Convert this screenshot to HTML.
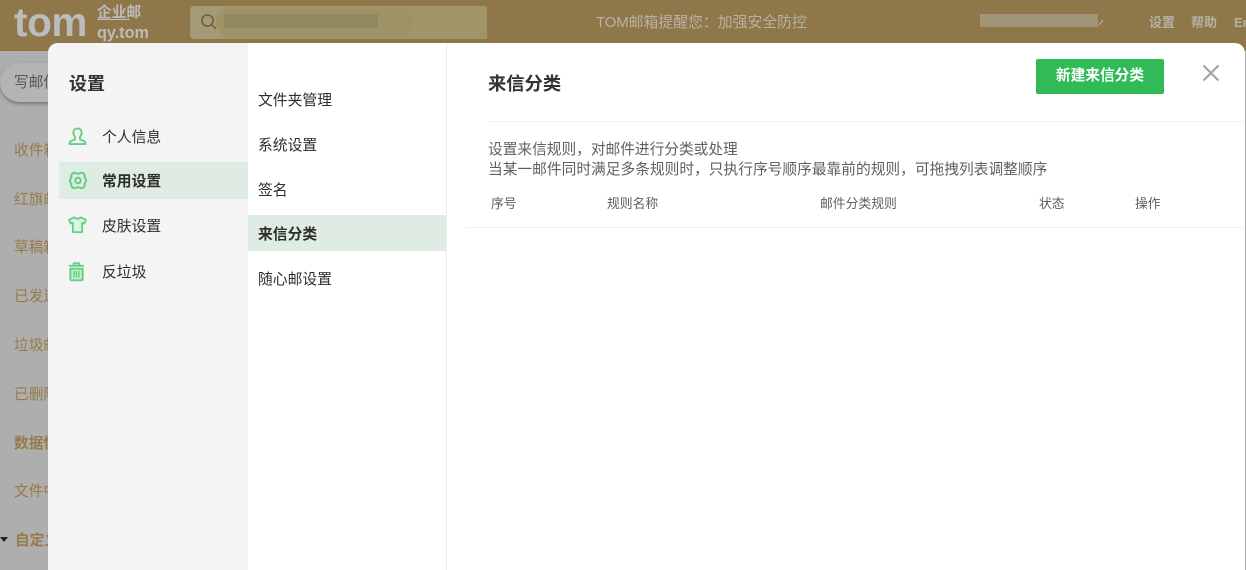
<!DOCTYPE html>
<html lang="zh">
<head>
<meta charset="utf-8">
<title>设置</title>
<style>
*{box-sizing:border-box;margin:0;padding:0}
html,body{width:1246px;height:570px;overflow:hidden;background:#aeaeae;font-family:"Liberation Sans","Noto Sans CJK SC",sans-serif}
body{position:relative}
.a{position:absolute;white-space:nowrap}
#hd{left:0;top:0;width:1246px;height:51px;background:#8f774a}
.side{left:14px;font-size:14.7px;line-height:20px;color:#967b49}
#modal{left:48px;top:43px;width:1197px;height:527px;background:#fff;border-radius:10px 10px 0 0;overflow:hidden}
.t{color:#2e2e2e;font-size:14.8px;line-height:22px}
.h{color:#5e5e5e;font-size:12.8px;line-height:18px}
</style>
</head>
<body>
<div class="a" id="hd"></div>
<div class="a" style="left:14px;top:-1px;font:bold 40.5px/46px 'Liberation Sans',sans-serif;color:#bcbcbc;letter-spacing:-.4px">tom</div>
<div class="a" style="left:97px;top:4px;font-size:14.7px;font-weight:700;line-height:18px;color:#bcbcbc">企业邮</div>
<div class="a" style="left:97px;top:24px;font-size:16.2px;font-weight:700;line-height:18px;color:#bcbcbc">qy.tom</div>
<div class="a" style="left:97px;top:19px;width:33px;height:1px;background:#bcbcbc"></div>
<div class="a" style="left:190px;top:6px;width:297px;height:33px;background:#9f9567;border-radius:4px 0 0 4px"></div>
<div class="a" style="left:190px;top:6px;width:35px;height:33px;background:#a49a78;border-radius:4px 0 0 4px"></div>
<div class="a" style="left:216px;top:7px;width:197px;height:29px;background:#9d9364;border-radius:13px"></div>
<div class="a" style="left:224px;top:14px;width:154px;height:14px;background:#90895f"></div>
<svg class="a" style="left:200px;top:13px" width="18" height="18" viewBox="0 0 18 18" fill="none" stroke="#6d5a36" stroke-width="1.4"><circle cx="7.500" cy="7.500" r="5.600"/><path d="M11.600 11.600L16 16"/></svg>
<div class="a" style="left:596px;top:12px;font-size:14.850px;line-height:22px;color:#b8b2a4">TOM邮箱提醒您：加强安全防控</div>
<div class="a" style="left:980px;top:14px;width:118px;height:13px;background:#a29478"></div>
<div class="a" style="left:1098px;top:22px;width:6px;height:1px;background:#bcbcbc;transform:rotate(-50deg)"></div>
<div class="a" style="left:1149px;top:13px;font-size:13px;font-weight:700;line-height:20px;color:#b5b0a4">设置</div>
<div class="a" style="left:1191px;top:13px;font-size:13px;font-weight:700;line-height:20px;color:#b5b0a4">帮助</div>
<div class="a" style="left:1234px;top:13px;font-size:13px;font-weight:700;line-height:20px;color:#b5b0a4">En</div>

<div class="a" style="left:0;top:63px;width:70px;height:39px;background:#b4b4b4;border-radius:20px;box-shadow:0 2px 3px #777"></div>
<div class="a" style="left:14px;top:73px;font-size:14.7px;line-height:20px;color:#555">写邮件</div>
<div class="a side" style="top:141px">收件箱</div>
<div class="a side" style="top:190px">红旗邮</div>
<div class="a side" style="top:238px">草稿箱</div>
<div class="a side" style="top:287px">已发送</div>
<div class="a side" style="top:336px">垃圾邮</div>
<div class="a side" style="top:385px">已删除</div>
<div class="a side" style="top:434px;font-weight:700">数据恢</div>
<div class="a side" style="top:482px">文件中</div>
<div class="a side" style="left:15px;top:531px;font-weight:700">自定义</div>
<div class="a" style="left:0;top:537px;width:0;height:0;border-left:4px solid transparent;border-right:4px solid transparent;border-top:5px solid #222"></div>

<div class="a" id="modal">
  <div class="a" style="left:0;top:0;width:200px;height:527px;background:#f4f4f4"></div>
  <div class="a" style="left:398px;top:0;width:1px;height:527px;background:#ececec"></div>

  <div class="a" style="left:21px;top:29px;font-size:18px;font-weight:700;line-height:24px;color:#333">设置</div>
  <div class="a" style="left:11px;top:119px;width:189px;height:37px;background:#dfece3"></div>

  <svg class="a" style="left:20px;top:84px" width="19" height="19" viewBox="0 0 20 20" fill="none" stroke="#62d082" stroke-width="2" stroke-linejoin="round"><path d="M10 1.500c-2.800 0-4.300 2-4.300 4.400 0 1.900.7 3.400 1.800 4.500v1.800c0 .8-.6 1.100-1.300 1.400l-3.100 1.300c-1 .4-1.400 1-1.400 1.900V18h16.600v-1.200c0-.9-.4-1.500-1.400-1.900l-3.100-1.300c-.7-.3-1.300-.6-1.300-1.400v-1.800c1.100-1.100 1.800-2.600 1.800-4.500 0-2.400-1.500-4.400-4.300-4.400z"/></svg>
  <svg class="a" style="left:20px;top:128px" width="20" height="19" viewBox="0 0 22 20" fill="none" stroke="#62d082" stroke-width="2.200" stroke-linejoin="round"><path d="M7.500 1.500c1 .6 1.600 1 3.500 1s2.500-.4 3.500-1c1.400 0 2.800.8 3.500 2 .7 1.300.5 2.400.2 3.100.9 1.200 1.800 2 1.800 3.400s-.9 2.200-1.800 3.400c.3.700.5 1.800-.2 3.100-.7 1.200-2.100 2-3.500 2-1-.6-1.600-1-3.500-1s-2.500.4-3.500 1c-1.400 0-2.800-.8-3.500-2-.7-1.300-.5-2.400-.2-3.100C2.900 12.200 2 11.400 2 10s.9-2.200 1.800-3.400c-.3-.7-.5-1.800.2-3.100.7-1.200 2.100-2 3.500-2z"/><circle cx="11" cy="10" r="3"/></svg>
  <svg class="a" style="left:20px;top:173px" width="19" height="18" viewBox="0 0 20 20" fill="#dff3e4" stroke="#62d082" stroke-width="2" stroke-linejoin="round"><path d="M6.500 1.500C7.500 2.500 8.600 3 10 3s2.500-.5 3.500-1.500l5.300 2.300c.5.200.6.600.4 1l-1.700 3.500-2.300-.8v9.600c0 .6-.3.900-.9.900H5.700c-.6 0-.9-.3-.9-.9V7.500l-2.300.8L.8 4.800c-.2-.4-.1-.8.4-1z"/></svg>
  <svg class="a" style="left:20px;top:218px" width="17" height="21" viewBox="0 0 18 21" fill="#c5eccf" stroke="#62d082" stroke-width="2" stroke-linejoin="round"><path d="M1 4.500h16M6 4V1.800h6V4" fill="none"/><path d="M2.500 7.500h13v11c0 .8-.5 1.300-1.300 1.300H3.800c-.8 0-1.300-.5-1.300-1.300z"/><path d="M6.500 10v7M9 10v7M11.500 10v7" stroke-width="1.500"/></svg>

  <div class="a t" style="left:54px;top:84px">个人信息</div>
  <div class="a t" style="left:54px;top:128px;font-weight:700">常用设置</div>
  <div class="a t" style="left:54px;top:173px">皮肤设置</div>
  <div class="a t" style="left:54px;top:219px">反垃圾</div>

  <div class="a" style="left:200px;top:172px;width:198px;height:36px;background:#dfece3"></div>
  <div class="a t" style="left:210px;top:47px">文件夹管理</div>
  <div class="a t" style="left:210px;top:92px">系统设置</div>
  <div class="a t" style="left:210px;top:137px">签名</div>
  <div class="a t" style="left:210px;top:181px;font-weight:700">来信分类</div>
  <div class="a t" style="left:210px;top:226px">随心邮设置</div>

  <div class="a" style="left:440px;top:28px;font-size:18.300px;font-weight:700;line-height:26px;color:#333">来信分类</div>
  <div class="a" style="left:988px;top:16px;width:128px;height:35px;background:#30bb56;border-radius:2px;color:#fff;font-size:14.700px;font-weight:700;line-height:35px;text-align:center">新建来信分类</div>
  <svg class="a" style="left:1154px;top:21px" width="18" height="18" viewBox="0 0 18 18" fill="none" stroke="#a3a3a3" stroke-width="2.200"><path d="M1.500 1.500l15 15M16.500 1.500l-15 15"/></svg>

  <div class="a" style="left:440px;top:78px;width:757px;height:1px;background:#f2f2f2"></div>
  <div class="a" style="left:440px;top:97px;font-size:14.700px;line-height:20px;color:#5f5f5f">设置来信规则，对邮件进行分类或处理</div>
  <div class="a" style="left:440px;top:117px;font-size:14.720px;line-height:20px;color:#5f5f5f">当某一邮件同时满足多条规则时，只执行序号顺序最靠前的规则，可拖拽列表调整顺序</div>
  <div class="a h" style="left:443px;top:152px">序号</div>
  <div class="a h" style="left:559px;top:152px">规则名称</div>
  <div class="a h" style="left:772px;top:152px">邮件分类规则</div>
  <div class="a h" style="left:991px;top:152px">状态</div>
  <div class="a h" style="left:1087px;top:152px">操作</div>
  <div class="a" style="left:417px;top:184px;width:780px;height:1px;background:#f2f2f2"></div>
</div>
<div class="a" style="left:1245px;top:51px;width:1px;height:519px;background:#aeaeae"></div>
</body>
</html>
